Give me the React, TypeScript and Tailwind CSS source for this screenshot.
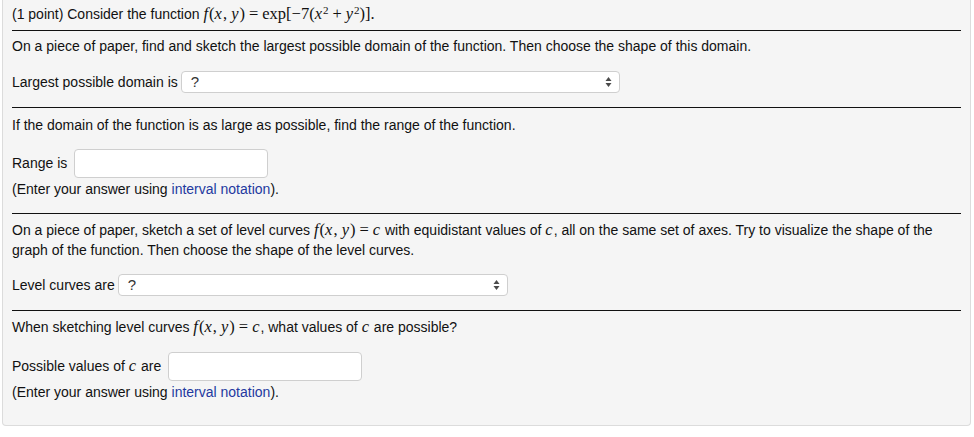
import React from 'react';

const serif = { fontFamily: '"Liberation Serif", "DejaVu Serif", serif' };

function M({ children }: { children: React.ReactNode }) {
  return (
    <span className="text-[16.5px] leading-none" style={serif}>
      {children}
    </span>
  );
}

function I({ children }: { children: React.ReactNode }) {
  return <i className="pr-[1px]">{children}</i>;
}

// spaced operator, MathJax style
function Op({ children }: { children: React.ReactNode }) {
  return <span className="mx-[4px]">{children}</span>;
}

function FXY() {
  return (
    <M>
      <I>f</I>(<I>x</I>, <I>y</I>)<Op>=</Op>
      <I>c</I>
    </M>
  );
}

function Select({ width }: { width: string }) {
  return (
    <div
      className={`ml-[3px] flex h-[22px] items-center justify-between rounded-[4px] border border-[#cfcfcf] bg-white pl-[9px] pr-[7px] text-[15px] text-[#333] ${width}`}
    >
      <span>?</span>
      <svg width="7" height="12" viewBox="0 0 7 12">
        <path d="M3.5 1 L6.5 5 L0.5 5 Z" fill="#4a4a4a" />
        <path d="M3.5 11 L6.5 7 L0.5 7 Z" fill="#4a4a4a" />
      </svg>
    </div>
  );
}

function Input() {
  return <div className="ml-[7px] h-[29px] w-[194px] rounded-[4px] border border-[#cfcfcf] bg-white" />;
}

function Hr({ className = '' }: { className?: string }) {
  return <div className={`h-px bg-[#111] ${className}`} />;
}

function IntervalNote({ className = '' }: { className?: string }) {
  return (
    <div className={`leading-[20px] ${className}`}>
      (Enter your answer using <span className="text-[#2339a0]">interval notation</span>).
    </div>
  );
}

export default function App() {
  return (
    <div
      className="min-h-[437px] bg-white"
      style={{ fontFamily: '"Liberation Sans", Arial, sans-serif' }}
    >
      <div className="ml-[2px] w-[969px] rounded-b-[4px] border-x border-b border-[#dcdcdc] bg-[#f5f5f5] pb-[23px] pl-[9px] pr-[9px] text-[14px] text-[#111]">
        <div className="pt-[4px] leading-[20px]">
          (1 point) Consider the function{' '}
          <M>
            <I>f</I>(<I>x</I>, <I>y</I>)<Op>=</Op>exp[−7(<I>x</I>
            <sup className="text-[11px]">2</sup>
            <Op>+</Op>
            <I>y</I>
            <sup className="text-[11px]">2</sup>)].
          </M>
        </div>
        <Hr className="mt-[6px]" />

        <div className="mt-[5px] leading-[20px]">
          On a piece of paper, find and sketch the largest possible domain of the function. Then choose the shape of
          this domain.
        </div>
        <div className="mt-[15px] flex items-center">
          <span>Largest possible domain is</span>
          <Select width="w-[439px]" />
        </div>
        <Hr className="mt-[14px]" />

        <div className="mt-[7px] leading-[20px]">
          If the domain of the function is as large as possible, find the range of the function.
        </div>
        <div className="mt-[14px] flex items-center">
          <span>Range is</span>
          <Input />
        </div>
        <IntervalNote className="mt-[1px]" />
        <Hr className="mt-[14px]" />

        <div className="mt-[6px] leading-[20px]">
          On a piece of paper, sketch a set of level curves <FXY /> with equidistant values of{' '}
          <M>
            <I>c</I>
          </M>
          , all on the same set of axes. Try to visualize the shape of the graph of the function. Then choose the shape
          of the level curves.
        </div>
        <div className="mt-[14px] flex items-center">
          <span>Level curves are</span>
          <Select width="w-[390px]" />
        </div>
        <Hr className="mt-[14px]" />

        <div className="mt-[6px] leading-[20px]">
          When sketching level curves <FXY />, what values of{' '}
          <M>
            <I>c</I>
          </M>{' '}
          are possible?
        </div>
        <div className="mt-[15px] flex items-center">
          <span>
            Possible values of{' '}
            <M>
              <I>c</I>
            </M>{' '}
            are
          </span>
          <Input />
        </div>
        <IntervalNote className="mt-[1px]" />
      </div>
    </div>
  );
}
